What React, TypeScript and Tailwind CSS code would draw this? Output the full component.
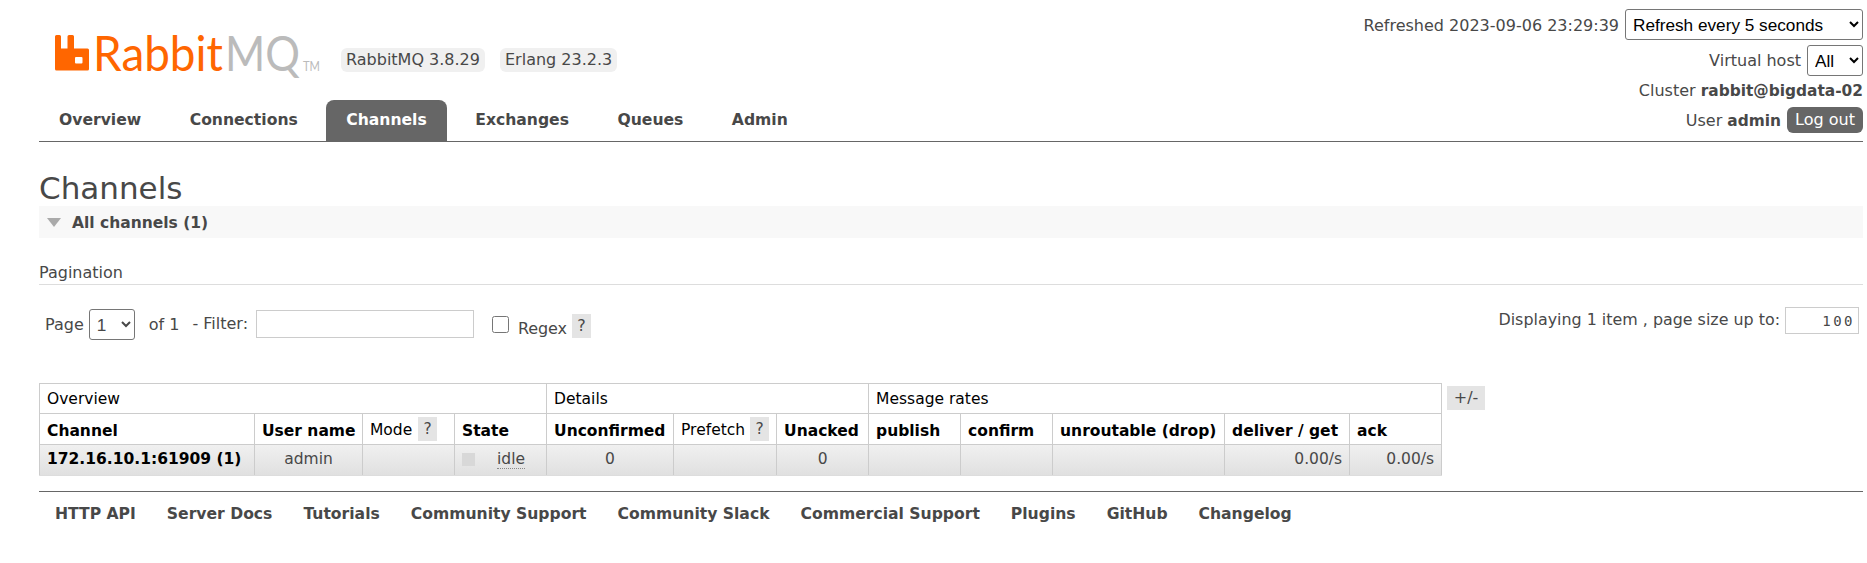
const verdana = "font-['DejaVu_Sans',Verdana,sans-serif]";

const navItems = ['Overview', 'Connections', 'Channels', 'Exchanges', 'Queues', 'Admin'];
const footerLinks = ['HTTP API', 'Server Docs', 'Tutorials', 'Community Support', 'Community Slack', 'Commercial Support', 'Plugins', 'GitHub', 'Changelog'];

function Help() {
  return <span className="inline-block w-[19px] h-[24px] leading-[24px] text-center bg-[#e4e4e4] text-[#484848] font-normal">?</span>;
}

function Logo() {
  return (
    <svg width="266" height="37" viewBox="0 0 266 37" className="block overflow-visible">
      <path
        fillRule="evenodd"
        fill="#ff6600"
        d="M1.5 0H4.5a1.5 1.5 0 0 1 1.5 1.5V13.5H12.5V1.5a1.5 1.5 0 0 1 1.5-1.5H17.5a1.5 1.5 0 0 1 1.5 1.5V13.5H32.5a1.5 1.5 0 0 1 1.5 1.5V34a1.5 1.5 0 0 1-1.5 1.5H1.5a1.5 1.5 0 0 1-1.5-1.5V1.5a1.5 1.5 0 0 1 1.5-1.5ZM21 22a1 1 0 0 0-1 1V27.5a1 1 0 0 0 1 1H26.5a1 1 0 0 0 1-1V23a1 1 0 0 0-1-1Z"
      />
      <text x="38" y="35.5" fontFamily="Lato" fontWeight="400" fontSize="49" fill="#ff6600" textLength="130" lengthAdjust="spacingAndGlyphs">Rabbit</text>
      <text x="170" y="35.5" fontFamily="Lato" fontWeight="400" fontSize="49" fill="#bbbbbb" textLength="75" lengthAdjust="spacingAndGlyphs">MQ</text>
      <text x="248" y="35.5" fontFamily="Lato" fontWeight="400" fontSize="13" fill="#bbbbbb" textLength="17" lengthAdjust="spacingAndGlyphs">TM</text>
    </svg>
  );
}

function Header() {
  return (
    <header className="flex justify-between items-stretch h-[142px] border-b border-[#666]">
      <div className="flex flex-col">
        <div className="flex items-end pl-4 pt-[27px] h-[72px]">
          <Logo />
          <span className="ml-[20px] h-[24px] leading-[24px] px-[5px] rounded-[6px] bg-[#f0f0f0] w-[144px] whitespace-nowrap">RabbitMQ 3.8.29</span>
          <span className="ml-[15px] h-[24px] leading-[24px] px-[5px] rounded-[6px] bg-[#f0f0f0] w-[117px] whitespace-nowrap">Erlang 23.2.3</span>
        </div>
        <nav className="flex gap-[8.5px] mt-auto">
          {navItems.map((item) => (
            <a
              key={item}
              className={`h-[41px] leading-[41px] px-5 font-bold text-[15.6px] ${item === 'Channels' ? 'rounded-t-[8px] bg-[#666] text-white' : ''}`}
            >
              {item}
            </a>
          ))}
        </nav>
      </div>
      <div className="flex flex-col items-end pt-[9px]">
        <div className="flex items-center gap-[6px] h-[31px]">
          <span className="whitespace-nowrap pt-[2px]">Refreshed 2023-09-06 23:29:39</span>
          <select defaultValue="5" className="w-[238px] h-[31px] border border-[#767676] rounded-[3px] bg-white text-black text-[17.2px] px-[3px] font-['Liberation_Sans',Arial,sans-serif]">
            <option value="5">Refresh every 5 seconds</option>
          </select>
        </div>
        <div className="flex items-center gap-[6px] h-[31px] mt-[5px]">
          <span>Virtual host</span>
          <select className="w-[56px] h-[31px] border border-[#767676] rounded-[3px] bg-white text-black text-[17.2px] px-[3px] font-['Liberation_Sans',Arial,sans-serif]">
            <option>All</option>
          </select>
        </div>
        <div className="mt-[5px] h-[20px] leading-[20px] whitespace-nowrap">Cluster <b className="text-[15.4px]">rabbit@bigdata-02</b></div>
        <div className="flex items-center gap-[6px] mt-[6px]">
          <span className="pt-[2px]">User <b className="text-[15.4px]">admin</b></span>
          <button className="h-[26px] w-[76px] rounded-[6px] bg-[#666] text-white text-center">Log out</button>
        </div>
      </div>
    </header>
  );
}

function Pagination() {
  return (
    <section>
      <h3 className="mt-[24px] h-[22px] leading-[21px] border-b border-[#ddd] box-content">Pagination</h3>
      <div className="flex justify-between h-[98px]">
        <div className="flex items-start pl-[6px] pt-[24px]">
          <span className="leading-[31px]">Page</span>
          <select className="ml-[5px] w-[46px] h-[31px] border border-[#767676] rounded-[3px] bg-white text-[17.2px] px-[3px] font-['Liberation_Sans',Arial,sans-serif]">
            <option>1</option>
          </select>
          <span className="ml-[14px] leading-[31px]">of 1</span>
          <span className="ml-[13px] leading-[29px]">- Filter:</span>
          <input className="ml-[8px] mt-[1px] w-[218px] h-[28px] border border-[#ccc] bg-white" />
          <input type="checkbox" className="ml-[18px] mt-[7px] w-[17px] h-[17px]" />
          <span className="ml-[9px] mt-[7px] h-[26px] flex items-center tracking-[-0.1px]">Regex</span>
          <span className="ml-[5px] mt-[5px]"><Help /></span>
        </div>
        <div className="flex items-start pt-[22px] pr-[4px]">
          <span className="leading-[25px] text-[15.9px] whitespace-nowrap">Displaying 1 item , page size up to:</span>
          <input readOnly value="100" className="ml-[5px] w-[74px] h-[27px] border border-[#ccc] bg-white text-[#484848] text-right px-[3px] text-[14px] tracking-[2.5px] font-['DejaVu_Sans_Mono',monospace]" />
        </div>
      </div>
    </section>
  );
}

const thBase = 'border border-[#ccc] px-[7px] text-left whitespace-nowrap';
const thRow = `${thBase} pt-[5px]`;
const tdBase = 'border border-[#ccc] border-b-[#ddd] px-[7px] pb-[1px] text-center whitespace-nowrap text-[#484848]';

function ChannelTable() {
  return (
    <div className="flex items-start gap-[5px]">
      <table className="border-collapse table-fixed w-[1402px] text-black text-[15.5px]">
        <colgroup>
          {[215, 108, 92, 92, 127, 103, 92, 92, 92, 172, 125, 92].map((w, i) => <col key={i} style={{ width: w }} />)}
        </colgroup>
        <thead>
          <tr className="h-[30px]">
            <th colSpan={4} className={`${thBase} pt-[2px] font-normal`}>Overview</th>
            <th colSpan={3} className={`${thBase} pt-[2px] font-normal`}>Details</th>
            <th colSpan={5} className={`${thBase} pt-[2px] font-normal`}>Message rates</th>
          </tr>
          <tr className="h-[31px]">
            <th className={`${thRow} font-bold`}>Channel</th>
            <th className={`${thRow} font-bold`}>User name</th>
            <th className={`${thBase} font-normal`}>
              <div className="flex items-center gap-[6px]"><span className="pt-[3px]">Mode</span><Help /></div>
            </th>
            <th className={`${thRow} font-bold`}>State</th>
            <th className={`${thRow} font-bold`}>Unconfirmed</th>
            <th className={`${thBase} font-normal !pr-0`}>
              <div className="flex items-center gap-[5px]"><span className="pt-[3px]">Prefetch</span><Help /></div>
            </th>
            <th className={`${thRow} font-bold`}>Unacked</th>
            <th className={`${thRow} font-bold`}>publish</th>
            <th className={`${thRow} font-bold`}>confirm</th>
            <th className={`${thRow} font-bold`}>unroutable (drop)</th>
            <th className={`${thRow} font-bold`}>deliver / get</th>
            <th className={`${thRow} font-bold`}>ack</th>
          </tr>
        </thead>
        <tbody>
          <tr className="h-[31px] bg-gradient-to-b from-[#f0f0f0] to-[#e0e0e0]">
            <td className={`${tdBase} !text-left font-bold !text-black`}>172.16.10.1:61909 (1)</td>
            <td className={tdBase}>admin</td>
            <td className={tdBase}></td>
            <td className={tdBase}>
              <div className="flex items-center">
                <span className="w-[13px] h-[13px] bg-[#d8d8d8]" />
                <span className="ml-[22px] border-b border-dotted border-[#888] leading-[17px]">idle</span>
              </div>
            </td>
            <td className={tdBase}>0</td>
            <td className={tdBase}></td>
            <td className={tdBase}>0</td>
            <td className={tdBase}></td>
            <td className={tdBase}></td>
            <td className={tdBase}></td>
            <td className={`${tdBase} !text-right`}>0.00/s</td>
            <td className={`${tdBase} !text-right`}>0.00/s</td>
          </tr>
        </tbody>
      </table>
      <span className="mt-[3px] w-[38px] h-[24px] leading-[24px] text-center bg-[#e4e4e4]">+/-</span>
    </div>
  );
}

function Footer() {
  return (
    <footer className="mt-[15px] border-t border-[#666] flex pl-[16px] pt-[11px]">
      {footerLinks.map((link) => (
        <a key={link} className="mr-[31px] font-bold text-[15.6px] leading-[22px] whitespace-nowrap">{link}</a>
      ))}
    </footer>
  );
}

export default function App() {
  return (
    <div className={`${verdana} h-[563px] pl-[39px] pr-[4px] bg-white text-[#484848] text-[16px]`}>
      <Header />
      <h1 className="text-[31px] font-normal leading-[36px] mt-[28px] h-[36px]">Channels</h1>
      <div className="h-[32px] bg-[#f8f8f8] flex items-center pl-[8px]">
        <span className="w-0 h-0 border-x-[7px] border-x-transparent border-t-[9px] border-t-[#aaa]" />
        <span className="ml-[11px] pt-[3px] font-bold text-[15.5px]">All channels (1)</span>
      </div>
      <Pagination />
      <ChannelTable />
      <Footer />
    </div>
  );
}
